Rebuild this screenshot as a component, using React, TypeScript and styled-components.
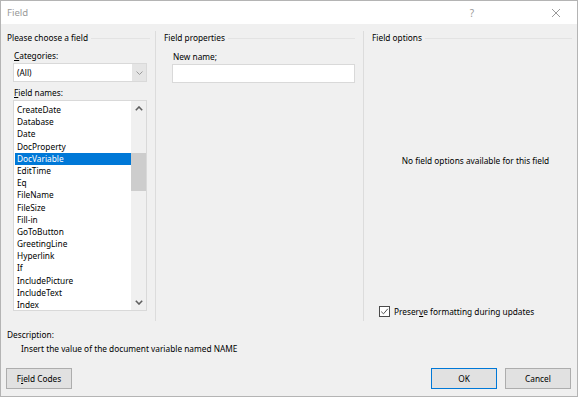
import React from "react";
import styled, { createGlobalStyle } from "styled-components";

const GlobalStyle = createGlobalStyle`
  html, body { margin: 0; padding: 0; background: #f0f0f0; }
  body { font-family: "Noto Sans", "Open Sans", "DejaVu Sans", sans-serif; font-size: 8.3px; color: #000; }
  * { box-sizing: border-box; }
`;

const Window = styled.div`
  width: 578px;
  height: 397px;
  border: 1px solid #b4b4b4;
  display: flex;
  flex-direction: column;
  background: #f0f0f0;
  overflow: hidden;
`;

const TitleBar = styled.div`
  height: 23px;
  background: #fff;
  display: flex;
  align-items: center;
  padding: 0 0 0 6px;
  color: #9a9a9a;
  font-size: 9.6px;
`;

const TitleText = styled.div`
  flex: 1;
`;

const TitleButton = styled.div<{ $w: number; $mr?: number }>`
  width: ${(p) => p.$w}px;
  margin-right: ${(p) => p.$mr ?? 0}px;
  height: 23px;
  display: flex;
  align-items: center;
  justify-content: center;
  color: #9a9a9a;
  font-size: 10px;
`;

const Body = styled.div`
  flex: 1;
  display: flex;
  flex-direction: column;
  padding: 7px 5px 0 5px;
`;

const GroupsRow = styled.div`
  display: flex;
  height: 290px;
`;

const Group = styled.div<{ $w: number; $divider?: boolean }>`
  width: ${(p) => p.$w}px;
  border-right: ${(p) => (p.$divider ? "1px solid #dcdcdc" : "none")};
  display: flex;
  flex-direction: column;
`;

const GroupHeader = styled.div<{ $pl: number; $pr: number }>`
  height: 14px;
  display: flex;
  align-items: center;
  gap: 3px;
  padding-left: ${(p) => p.$pl}px;
  padding-right: ${(p) => p.$pr}px;
  line-height: 14px;
  white-space: nowrap;
  &::after {
    content: "";
    flex: 1;
    height: 1px;
    background: #e3e3e3;
  }
`;

const GroupContent = styled.div<{ $pl: number; $pr: number }>`
  flex: 1;
  display: flex;
  flex-direction: column;
  padding-left: ${(p) => p.$pl}px;
  padding-right: ${(p) => p.$pr}px;
`;

const Label = styled.div<{ $mt: number; $ml?: number }>`
  height: 14px;
  line-height: 14px;
  margin-top: ${(p) => p.$mt}px;
  margin-left: ${(p) => p.$ml ?? 1}px;
  white-space: nowrap;
`;

const Combo = styled.div`
  height: 19px;
  display: flex;
  background: #fff;
  border: 1px solid #d9d9d9;
`;

const ComboValue = styled.div`
  flex: 1;
  display: flex;
  align-items: center;
  padding-left: 3px;
`;

const ComboButton = styled.div`
  width: 14px;
  background: #e5e5e5;
  display: flex;
  align-items: center;
  justify-content: center;
`;

const ListBox = styled.div`
  height: 211px;
  display: flex;
  background: #fff;
  border: 1px solid #d9d9d9;
  overflow: hidden;
`;

const ListItems = styled.div`
  flex: 1;
  padding-top: 3px;
  padding-left: 1px;
  overflow: hidden;
`;

const ListRow = styled.div<{ $selected?: boolean }>`
  height: 12.2px;
  line-height: 12.2px;
  padding-left: 2px;
  white-space: nowrap;
  background: ${(p) => (p.$selected ? "#0078d7" : "transparent")};
  color: ${(p) => (p.$selected ? "#fff" : "#000")};
`;

const ScrollBar = styled.div`
  width: 15px;
  display: flex;
  flex-direction: column;
  background: #f0f0f0;
`;

const ScrollArrow = styled.div`
  height: 15px;
  display: flex;
  align-items: center;
  justify-content: center;
`;

const ScrollTrack = styled.div`
  flex: 1;
`;

const ScrollThumb = styled.div`
  background: #cdcdcd;
  width: 100%;
`;

const TextInput = styled.div`
  height: 19px;
  background: #fff;
  border: 1px solid #d9d9d9;
`;

const Message = styled.div`
  margin-top: 109px;
  height: 14px;
  line-height: 14px;
  text-align: center;
  padding-left: 7px;
`;

const Spacer = styled.div`
  flex: 1;
`;

const CheckRow = styled.div`
  height: 14px;
  margin-bottom: 3px;
  margin-left: 7px;
  display: flex;
  align-items: center;
  gap: 4px;
`;

const CheckBox = styled.div`
  width: 11px;
  height: 11px;
  border: 1px solid #4a4a4a;
  background: #fff;
  display: flex;
  align-items: center;
  justify-content: center;
`;

const DescText = styled.div`
  height: 14px;
  line-height: 14px;
  padding-left: 15px;
`;

const ButtonRow = styled.div`
  margin-top: 12px;
  display: flex;
  align-items: center;
  gap: 8px;
  padding-right: 1px;
`;

const Button = styled.div<{ $default?: boolean }>`
  width: 66px;
  height: 21px;
  background: #e1e1e1;
  border: 1px solid ${(p) => (p.$default ? "#0078d7" : "#adadad")};
  display: flex;
  align-items: center;
  justify-content: center;
`;

const ButtonSpacer = styled.div`
  flex: 1;
`;

const U = styled.span`
  text-decoration: underline;
  text-underline-offset: 1px;
`;

const items = [
  "CreateDate",
  "Database",
  "Date",
  "DocProperty",
  "DocVariable",
  "EditTime",
  "Eq",
  "FileName",
  "FileSize",
  "Fill-in",
  "GoToButton",
  "GreetingLine",
  "Hyperlink",
  "If",
  "IncludePicture",
  "IncludeText",
  "Index",
];

export default function App() {
  return (
    <>
      <GlobalStyle />
      <Window>
        <TitleBar>
          <TitleText>Field</TitleText>
          <TitleButton $w={46} $mr={40}>?</TitleButton>
          <TitleButton $w={42}>
            <svg width="10" height="10" viewBox="0 0 10 10">
              <path d="M1 1 L9 9 M9 1 L1 9" stroke="#9a9a9a" strokeWidth="1" fill="none" />
            </svg>
          </TitleButton>
        </TitleBar>
        <Body>
          <GroupsRow>
            <Group $w={150} $divider>
              <GroupHeader $pl={1} $pr={5}>Please choose a field</GroupHeader>
              <GroupContent $pl={7} $pr={8}>
                <Label $mt={4}>
                  <U>C</U>ategories:
                </Label>
                <Combo>
                  <ComboValue>(All)</ComboValue>
                  <ComboButton>
                    <svg width="7" height="4" viewBox="0 0 7 4">
                      <path d="M0.5 0.5 L3.5 3.5 L6.5 0.5" stroke="#9a9a9a" strokeWidth="1" fill="none" />
                    </svg>
                  </ComboButton>
                </Combo>
                <Label $mt={4}>
                  <U>F</U>ield names:
                </Label>
                <ListBox>
                  <ListItems>
                    {items.map((it) => (
                      <ListRow key={it} $selected={it === "DocVariable"}>
                        {it}
                      </ListRow>
                    ))}
                  </ListItems>
                  <ScrollBar>
                    <ScrollArrow>
                      <svg width="8" height="5" viewBox="0 0 8 5">
                        <path d="M0.8 4.2 L4 1 L7.2 4.2" stroke="#606060" strokeWidth="1.6" fill="none" />
                      </svg>
                    </ScrollArrow>
                    <ScrollTrack>
                      <ScrollThumb style={{ marginTop: 37, height: 38 }} />
                    </ScrollTrack>
                    <ScrollArrow>
                      <svg width="8" height="5" viewBox="0 0 8 5">
                        <path d="M0.8 0.8 L4 4 L7.2 0.8" stroke="#606060" strokeWidth="1.6" fill="none" />
                      </svg>
                    </ScrollArrow>
                  </ScrollBar>
                </ListBox>
              </GroupContent>
            </Group>
            <Group $w={208} $divider>
              <GroupHeader $pl={8} $pr={8}>Field properties</GroupHeader>
              <GroupContent $pl={16} $pr={8}>
                <Label $mt={5}>New name;</Label>
                <TextInput />
              </GroupContent>
            </Group>
            <Group $w={208}>
              <GroupHeader $pl={8} $pr={0}>Field options</GroupHeader>
              <GroupContent $pl={8} $pr={0}>
                <Message>No field options available for this field</Message>
                <Spacer />
                <CheckRow>
                  <CheckBox>
                    <svg width="9" height="9" viewBox="0 0 9 9">
                      <path d="M1.2 4.6 L3.5 6.8 L7.8 1.8" stroke="#555" strokeWidth="1" fill="none" />
                    </svg>
                  </CheckBox>
                  <span>
                    Preser<U>v</U>e formatting during updates
                  </span>
                </CheckRow>
              </GroupContent>
            </Group>
          </GroupsRow>
          <Label $mt={7}>Description:</Label>
          <DescText>Insert the value of the document variable named NAME</DescText>
          <ButtonRow>
            <Button>
              <span>
                F<U>i</U>eld Codes
              </span>
            </Button>
            <ButtonSpacer />
            <Button $default>OK</Button>
            <Button>Cancel</Button>
          </ButtonRow>
        </Body>
      </Window>
    </>
  );
}
